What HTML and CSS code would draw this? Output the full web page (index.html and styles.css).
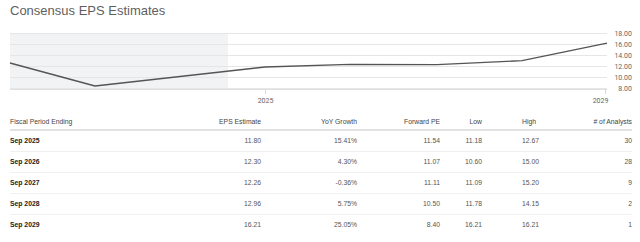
FILE: index.html
```html
<!DOCTYPE html>
<html>
<head>
<meta charset="utf-8">
<link rel="stylesheet" href="styles.css">
</head>
<body>
<div class="widget">
  <h2 class="title">Consensus EPS Estimates</h2>
  <svg class="chart" width="640" height="85" viewBox="0 0 640 85">
    <rect class="shade" x="10" y="8" width="218" height="56"/>
    <g class="grid">
      <line x1="10" y1="8.5" x2="607" y2="8.5"/>
      <line x1="10" y1="19.5" x2="607" y2="19.5"/>
      <line x1="10" y1="30.5" x2="607" y2="30.5"/>
      <line x1="10" y1="41.5" x2="607" y2="41.5"/>
      <line x1="10" y1="52.5" x2="607" y2="52.5"/>
      <line x1="10" y1="63.5" x2="607" y2="63.5"/>
    </g>
    <line class="axis" x1="10" y1="64.5" x2="607" y2="64.5"/>
    <line class="tick" x1="265.5" y1="64" x2="265.5" y2="69"/>
    <line class="tick" x1="605.5" y1="64" x2="605.5" y2="69"/>
    <polyline class="series" points="10,38 95,61 180,51.5 265,42 350,39.4 437,39.6 522,35.7 607,18.2"/>
    <g class="ylabels">
      <text x="632" y="11">18.00</text>
      <text x="632" y="22">16.00</text>
      <text x="632" y="33">14.00</text>
      <text x="632" y="44">12.00</text>
      <text x="632" y="55">10.00</text>
      <text x="632" y="66">8.00</text>
    </g>
    <g class="xlabels">
      <text x="265.5" y="78">2025</text>
      <text x="600.5" y="78">2029</text>
    </g>
  </svg>
  <table class="estimates">
    <colgroup>
      <col class="c-period"><col class="c-eps"><col class="c-yoy"><col class="c-fpe"><col class="c-low"><col class="c-high"><col class="c-an">
    </colgroup>
    <thead>
      <tr>
        <th class="left">Fiscal Period Ending</th>
        <th>EPS Estimate</th>
        <th>YoY Growth</th>
        <th>Forward PE</th>
        <th>Low</th>
        <th class="high">High</th>
        <th># of Analysts</th>
      </tr>
    </thead>
    <tbody>
      <tr><td class="left period">Sep 2025</td><td>11.80</td><td>15.41%</td><td>11.54</td><td>11.18</td><td class="high">12.67</td><td>30</td></tr>
      <tr><td class="left period">Sep 2026</td><td>12.30</td><td>4.30%</td><td>11.07</td><td>10.60</td><td class="high">15.00</td><td>28</td></tr>
      <tr><td class="left period">Sep 2027</td><td>12.26</td><td>-0.36%</td><td>11.11</td><td>11.09</td><td class="high">15.20</td><td>9</td></tr>
      <tr><td class="left period">Sep 2028</td><td>12.96</td><td>5.75%</td><td>10.50</td><td>11.78</td><td class="high">14.15</td><td>2</td></tr>
      <tr><td class="left period">Sep 2029</td><td>16.21</td><td>25.05%</td><td>8.40</td><td>16.21</td><td class="high">16.21</td><td>1</td></tr>
    </tbody>
  </table>
</div>
</body>
</html>
```
FILE: styles.css
```css
html, body {
  margin: 0;
  padding: 0;
  background: #fff;
}
.widget {
  width: 640px;
  font-family: "Liberation Sans", Arial, sans-serif;
}
.title {
  margin: 0;
  height: 25px;
  padding: 2px 0 0 10px;
  box-sizing: border-box;
  font-size: 13px;
  line-height: 18px;
  font-weight: normal;
  color: #5f5f5f;
}
.chart {
  display: block;
}
.shade { fill: #f2f3f5; }
.grid line { stroke: #e6e6e6; stroke-width: 1; }
.axis { stroke: #e0e0e0; stroke-width: 1; }
.tick { stroke: #d8d8d8; stroke-width: 1; }
.series { fill: none; stroke: #555; stroke-width: 1.3; stroke-linejoin: round; }
.ylabels text {
  font-family: "Roboto", "Liberation Sans", sans-serif;
  font-size: 7px;
  fill: #666;
  text-anchor: end;
}
.xlabels text {
  font-family: "Roboto", "Liberation Sans", sans-serif;
  font-size: 7px;
  fill: #666;
  text-anchor: middle;
}
.estimates {
  margin-left: 10px;
  width: 622px;
  table-layout: fixed;
  border-collapse: collapse;
  font-size: 6.8px;
}
.c-period { width: 151px; }
.c-eps { width: 100px; }
.c-yoy { width: 96px; }
.c-fpe { width: 83px; }
.c-low { width: 42px; }
.c-high { width: 90px; }
.c-an { width: 60px; }
.estimates th {
  padding: 7px 0 2px;
  height: 10px;
  line-height: 10px;
  text-align: right;
  font-weight: normal;
  color: #444;
  border-bottom: 2px solid #e2e2e2;
  white-space: nowrap;
}
.estimates td {
  height: 20px;
  padding: 0;
  line-height: 10px;
  text-align: right;
  color: #555;
  border-bottom: 1px solid #f0f0f0;
  white-space: nowrap;
}
.estimates tbody tr:last-child td { border-bottom: none; }
.estimates .left { text-align: left; }
.estimates .high { text-align: left; padding-left: 40px; }
.estimates .period { font-weight: bold; color: #222; }
```
